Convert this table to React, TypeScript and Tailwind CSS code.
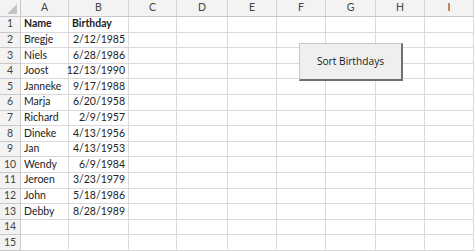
import React from 'react';

const columns = [
    { label: 'A', width: 'w-[48px]' },
    { label: 'B', width: 'w-[60px]' },
    { label: 'C', width: 'w-[48px]' },
    { label: 'D', width: 'w-[51px]' },
    { label: 'E', width: 'w-[49px]' },
    { label: 'F', width: 'w-[49px]' },
    { label: 'G', width: 'w-[50px]' },
    { label: 'H', width: 'w-[49px]' },
    { label: 'I', width: 'w-[49px]' },
];

const rows: [string, string, boolean][] = [
    ['Name', 'Birthday', true],
    ['Bregje', '2/12/1985', false],
    ['Niels', '6/28/1986', false],
    ['Joost', '12/13/1990', false],
    ['Janneke', '9/17/1988', false],
    ['Marja', '6/20/1958', false],
    ['Richard', '2/9/1957', false],
    ['Dineke', '4/13/1956', false],
    ['Jan', '4/13/1953', false],
    ['Wendy', '6/9/1984', false],
    ['Jeroen', '3/23/1979', false],
    ['John', '5/18/1986', false],
    ['Debby', '8/28/1989', false],
    ['', '', false],
    ['', '', false],
];

export default function App() {
    return (
        <div className="relative w-[474px] h-[251px] overflow-hidden bg-white text-[#222] font-['Lato','Open_Sans',sans-serif] text-[10.5px]">
            {/* column headers */}
            <div className="flex h-[17px] bg-[#f3f3f3] border-b border-[#c9c9c9]">
                <div className="relative w-[21px] shrink-0 border-r border-[#c9c9c9]">
                    <svg className="absolute right-[3px] bottom-[2px]" width="10" height="10" viewBox="0 0 10 10">
                        <polygon points="10,0 10,10 0,10" fill="#c3c3c3" />
                    </svg>
                </div>
                {columns.map((c) => (
                    <div key={c.label} className={`${c.width} shrink-0 border-r border-[#d4d4d4] flex items-center justify-center text-[#444]`}>
                        {c.label}
                    </div>
                ))}
            </div>

            {/* rows */}
            {rows.map(([name, date, bold], i) => (
                <div key={i} className="flex h-[15.6px]">
                    <div className="w-[21px] shrink-0 bg-[#f3f3f3] border-r border-b border-[#c9c9c9] flex items-center justify-center text-[#444]">
                        {i + 1}
                    </div>
                    {columns.map((c, j) => (
                        <div
                            key={c.label}
                            className={`${c.width} shrink-0 border-r border-b border-[#dadada] flex items-center px-[3px] whitespace-nowrap ${j === 1 && !bold ? 'justify-end' : ''} ${bold ? 'font-bold' : ''}`}
                        >
                            {j === 0 ? name : j === 1 ? date : ''}
                        </div>
                    ))}
                </div>
            ))}

            {/* form button */}
            <button className="absolute left-[299px] top-[43px] w-[104px] h-[38px] bg-[#efefef] border border-[#c8c8c8] border-r-2 border-b-2 border-r-[#6f6f6f] border-b-[#6f6f6f] text-[#1a1a1a] text-[10.2px] font-['Open_Sans',sans-serif] flex items-center justify-center">
                Sort Birthdays
            </button>
        </div>
    );
}
